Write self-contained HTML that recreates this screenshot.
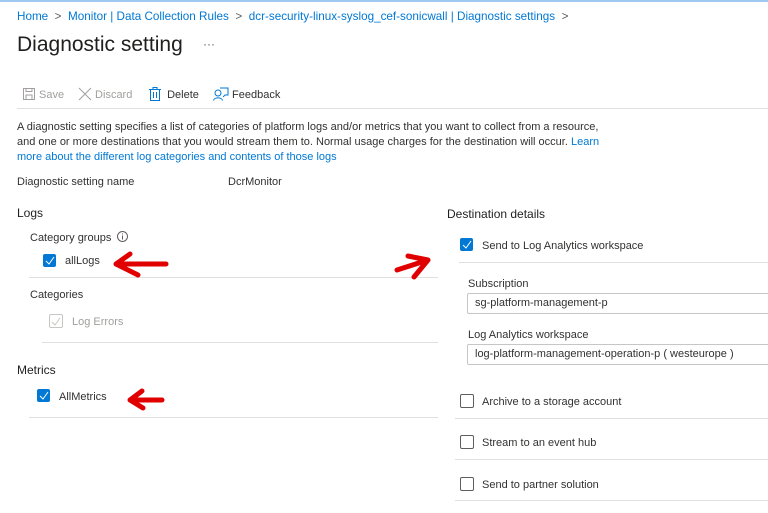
<!DOCTYPE html>
<html><head><style>
body{margin:0;width:768px;height:513px;background:#fff;font-family:"Liberation Sans",sans-serif;color:#323130;position:relative;overflow:hidden}
.a{position:absolute;white-space:nowrap}
.l{color:#0078d4}
.cb{position:absolute;width:13px;height:13px;border-radius:2px;background:#0078d4}
.cb svg{position:absolute;left:2px;top:2px}
.ub{position:absolute;width:12px;height:12px;border:1px solid #605e5c;border-radius:2px;background:#fff}
.hr{position:absolute;height:1px;background:#e1dfdd}
.in{position:absolute;height:19px;border:1px solid #c8c6c4;border-radius:2px;font-size:11px;line-height:19px;padding-left:7px;box-sizing:content-box}
</style></head><body>
<div style="position:absolute;left:0;top:0;width:768px;height:2px;background:#9ec8ef"></div>
<div class="a l" style="left:17px;top:10px;font-size:11.7px">Home <span style="color:#605e5c">&nbsp;&gt;&nbsp;</span> Monitor | Data Collection Rules <span style="color:#605e5c">&nbsp;&gt;&nbsp;</span> dcr-security-linux-syslog_cef-sonicwall | Diagnostic settings <span style="color:#605e5c">&nbsp;&gt;</span></div>
<div class="a" style="left:17px;top:33px;font-size:21px;color:#201f1e">Diagnostic setting</div>
<div class="a" style="left:203px;top:37px;font-size:12px;color:#605e5c">···</div>
<div class="a" style="left:22px;top:87px;font-size:11px;color:#a19f9d">
<svg width="14" height="14" style="vertical-align:-3px" fill="none" stroke="#a19f9d"><rect x="1.5" y="1.5" width="11" height="11"/><rect x="4" y="8" width="6" height="4.5"/><rect x="4" y="1.5" width="6" height="3"/></svg> Save</div>
<div class="a" style="left:78px;top:87px;font-size:11px;color:#a19f9d">
<svg width="14" height="14" style="vertical-align:-3px" stroke="#a19f9d"><path d="M1 1L13 13M13 1L1 13"/></svg> Discard</div>
<div class="a" style="left:149px;top:87px;font-size:11px;color:#323130">
<svg width="12" height="14" style="vertical-align:-3px" fill="none" stroke="#0078d4"><path d="M0 2.5H12M4 2.5V0.5H8V2.5M1.5 2.5V13.5H10.5V2.5M4.5 5V11M7.5 5V11"/></svg>&nbsp; Delete</div>
<div class="a" style="left:213px;top:87px;font-size:11px;color:#323130">
<svg width="16" height="14" style="vertical-align:-3px" fill="none" stroke="#0078d4"><circle cx="5" cy="6" r="3"/><path d="M0.5 13.5C1 10 9 10 9.5 13.5M7 1H15V8H12L10 10"/></svg> Feedback</div>
<div class="hr" style="left:17px;top:108px;width:751px"></div>
<div class="a" style="left:17px;top:120px;font-size:11px;line-height:15px;color:#323130">A diagnostic setting specifies a list of categories of platform logs and/or metrics that you want to collect from a resource,<br>and one or more destinations that you would stream them to. Normal usage charges for the destination will occur. <span class="l">Learn</span><br><span class="l">more about the different log categories and contents of those logs</span></div>
<div class="a" style="left:17px;top:176px;font-size:11px">Diagnostic setting name</div>
<div class="a" style="left:228px;top:176px;font-size:11px">DcrMonitor</div>
<div class="a" style="left:17px;top:206px;font-size:12px;color:#201f1e">Logs</div>
<div class="a" style="left:447px;top:207px;font-size:12px;color:#201f1e">Destination details</div>
<div class="a" style="left:30px;top:231px;font-size:11px">Category groups <svg width="11" height="11" style="vertical-align:-1px;margin-left:3px" fill="none" stroke="#605e5c"><circle cx="5.5" cy="5.5" r="5"/><path d="M5.5 4.5V8.5M5.5 2.5V3.5"/></svg></div>
<div class="cb" style="left:43px;top:254px"><svg width="10" height="9" fill="none" stroke="#fff"><path d="M1 5L4 8L9 1"/></svg></div>
<div class="a" style="left:65px;top:255px;font-size:11px">allLogs</div>
<div class="hr" style="left:29px;top:277px;width:409px"></div>
<div class="a" style="left:30px;top:289px;font-size:11px">Categories</div>
<div class="ub" style="left:49px;top:314px;border-color:#c8c6c4"><svg width="10" height="9" style="position:absolute;left:1px;top:2px" fill="none" stroke="#c8c6c4"><path d="M1 5L4 8L9 1"/></svg></div>
<div class="a" style="left:72px;top:316px;font-size:11px;color:#a19f9d">Log Errors</div>
<div class="hr" style="left:42px;top:342px;width:396px"></div>
<div class="a" style="left:17px;top:363px;font-size:12px;color:#201f1e">Metrics</div>
<div class="cb" style="left:37px;top:389px"><svg width="10" height="9" fill="none" stroke="#fff"><path d="M1 5L4 8L9 1"/></svg></div>
<div class="a" style="left:59px;top:391px;font-size:11px">AllMetrics</div>
<div class="hr" style="left:29px;top:417px;width:409px"></div>
<div class="cb" style="left:460px;top:238px"><svg width="10" height="9" fill="none" stroke="#fff"><path d="M1 5L4 8L9 1"/></svg></div>
<div class="a" style="left:482px;top:240px;font-size:11px">Send to Log Analytics workspace</div>
<div class="hr" style="left:459px;top:262px;width:309px"></div>
<div class="a" style="left:468px;top:278px;font-size:11px">Subscription</div>
<div class="in" style="left:467px;top:293px;width:320px">sg-platform-management-p</div>
<div class="a" style="left:468px;top:329px;font-size:11px">Log Analytics workspace</div>
<div class="in" style="left:467px;top:344px;width:320px">log-platform-management-operation-p ( westeurope )</div>
<div class="ub" style="left:460px;top:394px"></div>
<div class="a" style="left:482px;top:396px;font-size:11px">Archive to a storage account</div>
<div class="hr" style="left:455px;top:418px;width:313px"></div>
<div class="ub" style="left:460px;top:435px"></div>
<div class="a" style="left:482px;top:437px;font-size:11px">Stream to an event hub</div>
<div class="hr" style="left:455px;top:459px;width:313px"></div>
<div class="ub" style="left:460px;top:477px"></div>
<div class="a" style="left:482px;top:479px;font-size:11px">Send to partner solution</div>
<div class="hr" style="left:455px;top:500px;width:313px"></div>
<svg class="a" style="left:0;top:0" width="768" height="513" fill="none" stroke="#e00000" stroke-width="5" stroke-linecap="round" stroke-linejoin="round">
<path d="M166 264H116M130 254L116 264L138 275"/>
<path d="M162 400H130M142 391L130 400L143 408"/>
<path d="M397 270L428 260M408 256L428 260L414 277"/>
</svg>
</body></html>
